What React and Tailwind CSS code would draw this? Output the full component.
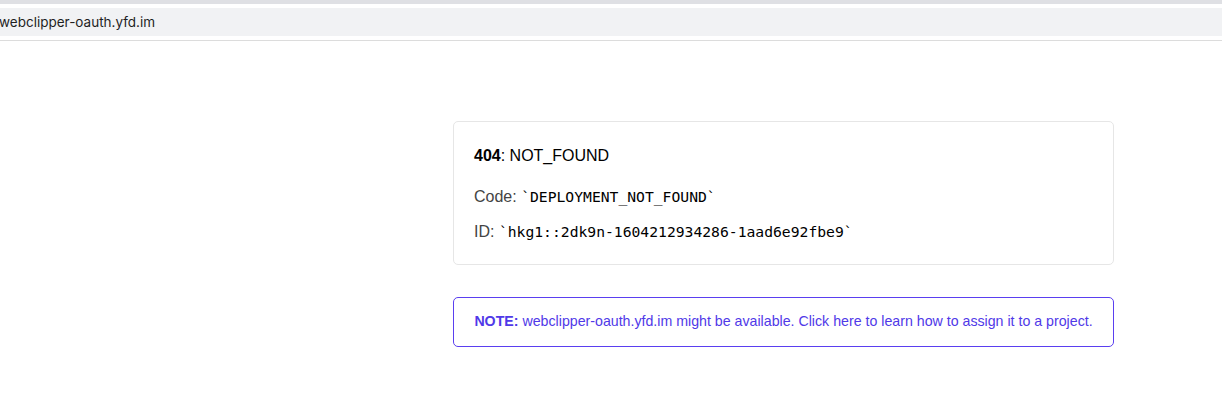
import React from 'react';

const App = () => {
  return (
    <div className="w-[1222px] h-[396px] bg-white overflow-hidden font-['Liberation_Sans',Arial,sans-serif]">
      <div className="h-[4px] bg-[#dfe0e4]" />
      <div className="mt-[4px] h-[28px] bg-[#f1f2f4] flex items-center">
        <span className="-ml-[1px] text-[13.5px] text-[#1f1f1f] font-['Inter',sans-serif]">webclipper-oauth.yfd.im</span>
      </div>
      <div className="mt-[4px] h-px bg-[#dcdcdc]" />

      <div className="pl-[453px] pt-[80px]">
        <div className="w-[661px] h-[144px] border border-[#e6e6e6] rounded-[5px] px-[20px] pt-[24px]">
          <p className="text-[16px] leading-[20px] text-black">
            <span className="font-bold">404</span>: NOT_FOUND
          </p>
          <p className="mt-[21px] text-[16px] leading-[20px] text-[#444]">
            Code: <code className="font-['DejaVu_Sans_Mono',monospace] text-[14.7px] text-black">`DEPLOYMENT_NOT_FOUND`</code>
          </p>
          <p className="mt-[15px] text-[16px] leading-[20px] text-[#444]">
            ID: <code className="font-['DejaVu_Sans_Mono',monospace] text-[14.7px] text-black">`hkg1::2dk9n-1604212934286-1aad6e92fbe9`</code>
          </p>
        </div>

        <div className="mt-[32px] w-[661px] h-[50px] border border-[#5a3ff0] rounded-[5px] flex items-center justify-center">
          <p className="text-[14.2px] text-[#5039e8]">
            <span className="font-bold">NOTE:</span> webclipper-oauth.yfd.im might be available. Click here to learn how to assign it to a project.
          </p>
        </div>
      </div>
    </div>
  );
};

export default App;
